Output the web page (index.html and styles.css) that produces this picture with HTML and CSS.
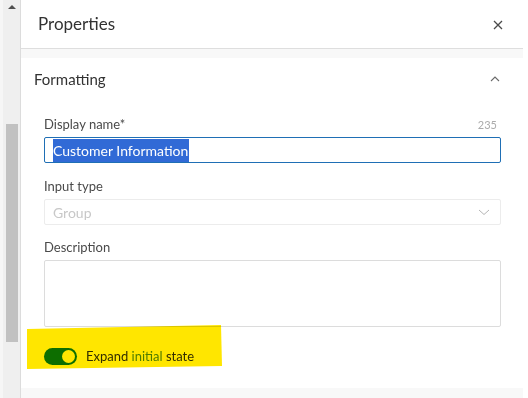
FILE: index.html
```html
<!DOCTYPE html>
<html lang="en">
<head>
    <meta charset="UTF-8">
    <meta name="viewport" content="width=device-width, initial-scale=1.0">
    <title>Properties</title>
    <link rel="stylesheet" href="styles.css">
</head>
<body>
    <div class="scrollbar">
        <div class="scroll-arrow"></div>
        <div class="scroll-thumb"></div>
    </div>
    <div class="panel">
        <div class="panel-header">
            <h1 class="panel-title">Properties</h1>
            <svg class="close-icon" width="12" height="12" viewBox="0 0 12 12">
                <path d="M2 2 L10 10 M10 2 L2 10" stroke="#4a4a4a" stroke-width="1.3" fill="none"/>
            </svg>
        </div>
        <div class="section">
            <div class="section-header">
                <span class="section-title">Formatting</span>
                <svg width="12" height="8" viewBox="0 0 12 8">
                    <path d="M2 6 L6 2 L10 6" stroke="#6a6a6a" stroke-width="1.1" fill="none"/>
                </svg>
            </div>
            <div class="section-body">
                <div class="field">
                    <div class="label-row">
                        <label for="displayName">Display name*</label>
                        <span class="counter">235</span>
                    </div>
                    <div class="text-input focused" id="displayName"><span class="selected">Customer Information</span></div>
                </div>
                <div class="field tight">
                    <div class="label-row"><label>Input type</label></div>
                    <div class="text-input disabled">
                        <span>Group</span>
                        <svg width="12" height="8" viewBox="0 0 12 8">
                            <path d="M1 2 L6 6.5 L11 2" stroke="#b5b5b5" stroke-width="1" fill="none"/>
                        </svg>
                    </div>
                </div>
                <div class="field">
                    <div class="label-row"><label>Description</label></div>
                    <div class="text-area"></div>
                </div>
                <div class="toggle-row">
                    <span class="switch"><span class="knob"></span></span>
                    <span class="toggle-label">Expand <span class="word">initial</span> state</span>
                    <svg class="marker" width="196" height="46" viewBox="0 0 196 46" preserveAspectRatio="none">
                        <polygon points="0,4 194,0 195,41 0,44" fill="#ffe600"/>
                    </svg>
                </div>
            </div>
        </div>
    </div>
</body>
</html>
```

FILE: styles.css
```css
body {
    margin: 0;
    height: 398px;
    display: flex;
    background: #fff;
    font-family: 'Lato', 'Noto Sans', sans-serif;
    color: #323232;
    overflow: hidden;
}
.scrollbar {
    width: 17px;
    border-left: 3px solid #f6f6f6;
    border-right: 1px solid #dcdcdc;
    background: #efefef;
    display: flex;
    flex-direction: column;
    align-items: center;
}
.scroll-arrow {
    margin-top: 5px;
    width: 0;
    height: 0;
    border-left: 4px solid transparent;
    border-right: 4px solid transparent;
    border-bottom: 4px solid #505050;
}
.scroll-thumb {
    margin-top: 115px;
    width: 12px;
    height: 218px;
    background: #c1c1c1;
}
.panel {
    flex: 1;
    margin-right: 5px;
    background: #f8f8f8;
    display: flex;
    flex-direction: column;
}
.panel-header {
    height: 48px;
    background: #fff;
    border-bottom: 1px solid #dedede;
    display: flex;
    align-items: center;
    justify-content: space-between;
    padding: 0 19px 0 17px;
}
.panel-title {
    margin: 0;
    font-size: 17px;
    font-weight: normal;
    color: #323232;
    position: relative;
    top: -1px;
}
.close-icon {
    position: relative;
    top: 1px;
}
.section {
    margin-top: 9px;
    height: 330px;
    background: #fff;
}
.section-header {
    height: 42px;
    display: flex;
    align-items: center;
    justify-content: space-between;
    padding: 0 22px 0 13px;
}
.section-title {
    font-size: 15px;
    color: #323232;
}
.section-body {
    padding: 16px 22px 0 23px;
}
.field {
    margin-bottom: 15px;
}
.field.tight {
    margin-bottom: 14px;
}
.label-row {
    display: flex;
    justify-content: space-between;
    align-items: baseline;
    margin-bottom: 3px;
    height: 18px;
}
label {
    font-size: 13px;
    color: #4a4a4a;
}
.counter {
    font-size: 11px;
    color: #ababab;
    margin-right: 4px;
}
.text-input {
    height: 24px;
    border: 1px solid #e6e6e6;
    border-radius: 2px;
    display: flex;
    align-items: center;
    justify-content: space-between;
    padding: 0 10px 0 8px;
    font-size: 14px;
}
.text-input.focused {
    border-color: #1f6fb5;
}
.selected {
    background: #316ad6;
    color: #fff;
    line-height: 23px;
    padding-right: 1px;
}
.text-input.disabled {
    color: #c8c8c8;
    border-color: #ececec;
}
.text-area {
    height: 65px;
    border: 1px solid #dcdcdc;
    border-radius: 2px;
}
.toggle-row {
    position: relative;
    margin-top: 20px;
    display: flex;
    align-items: center;
    gap: 9px;
    height: 18px;
}
.switch {
    width: 33px;
    height: 17px;
    border-radius: 9px;
    background: #0d7a1c;
    position: relative;
}
.knob {
    position: absolute;
    right: 2px;
    top: 2px;
    width: 13px;
    height: 13px;
    border-radius: 50%;
    background: #fff;
}
.toggle-label {
    font-size: 13px;
    color: #323232;
}
.word {
    color: #4f8a10;
}
.marker {
    position: absolute;
    left: -17px;
    top: -22px;
    mix-blend-mode: multiply;
}
```
